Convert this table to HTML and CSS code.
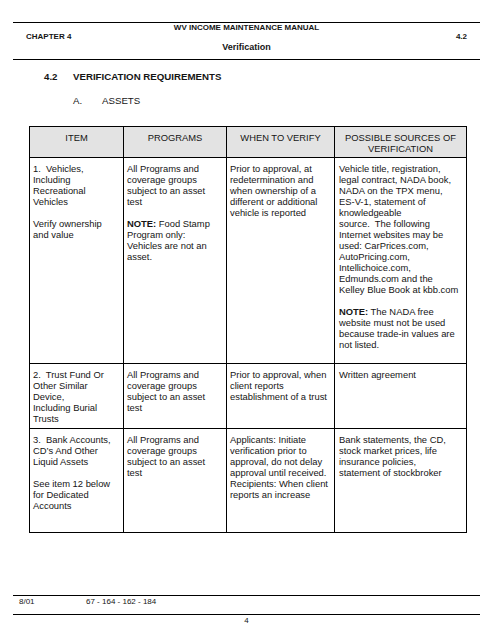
FILE: index.html
```html
<!DOCTYPE html>
<html lang="en">
<head>
<meta charset="utf-8">
<title>WV Income Maintenance Manual – 4.2 Verification</title>
<link rel="stylesheet" href="styles.css">
</head>
<body>
<div class="page">
  <header class="hdr">
    <div class="hdr-title">WV INCOME MAINTENANCE MANUAL</div>
    <div class="hdr-chapter">CHAPTER 4</div>
    <div class="hdr-num">4.2</div>
    <div class="hdr-sub">Verification</div>
  </header>

  <h1 class="section"><span class="sec-num">4.2</span><span>VERIFICATION REQUIREMENTS</span></h1>
  <h2 class="subsection"><span class="sub-num">A.</span><span>ASSETS</span></h2>

  <table class="vt">
    <colgroup>
      <col class="c1"><col class="c2"><col class="c3"><col class="c4">
    </colgroup>
    <thead>
      <tr>
        <th>ITEM</th>
        <th>PROGRAMS</th>
        <th>WHEN TO VERIFY</th>
        <th>POSSIBLE SOURCES OF<br>VERIFICATION</th>
      </tr>
    </thead>
    <tbody>
      <tr class="r1">
        <td>
          <p>1.&nbsp; Vehicles,<br>Including<br>Recreational<br>Vehicles</p>
          <p>Verify ownership<br>and value</p>
        </td>
        <td>
          <p>All Programs and<br>coverage groups<br>subject to an asset<br>test</p>
          <p><b>NOTE:</b> Food Stamp<br>Program only:<br>Vehicles are not an<br>asset.</p>
        </td>
        <td>
          <p>Prior to approval, at<br>redetermination and<br>when ownership of a<br>different or additional<br>vehicle is reported</p>
        </td>
        <td>
          <p>Vehicle title, registration,<br>legal contract, NADA book,<br>NADA on the TPX menu,<br>ES-V-1, statement of<br>knowledgeable<br>source.&nbsp; The following<br>Internet websites may be<br>used: CarPrices.com,<br>AutoPricing.com,<br>Intellichoice.com,<br>Edmunds.com and the<br>Kelley Blue Book at kbb.com</p>
          <p><b>NOTE:</b> The NADA free<br>website must not be used<br>because trade-in values are<br>not listed.</p>
        </td>
      </tr>
      <tr class="r2">
        <td>
          <p>2.&nbsp; Trust Fund Or<br>Other Similar<br>Device,<br>Including Burial<br>Trusts</p>
        </td>
        <td>
          <p>All Programs and<br>coverage groups<br>subject to an asset<br>test</p>
        </td>
        <td>
          <p>Prior to approval, when<br>client reports<br>establishment of a trust</p>
        </td>
        <td>
          <p>Written agreement</p>
        </td>
      </tr>
      <tr class="r3">
        <td>
          <p>3.&nbsp; Bank Accounts,<br>CD’s And Other<br>Liquid Assets</p>
          <p>See item 12 below<br>for Dedicated<br>Accounts</p>
        </td>
        <td>
          <p>All Programs and<br>coverage groups<br>subject to an asset<br>test</p>
        </td>
        <td>
          <p>Applicants: Initiate<br>verification prior to<br>approval, do not delay<br>approval until received.<br>Recipients: When client<br>reports an increase</p>
        </td>
        <td>
          <p>Bank statements, the CD,<br>stock market prices, life<br>insurance policies,<br>statement of stockbroker</p>
        </td>
      </tr>
    </tbody>
  </table>

  <footer class="ftr">
    <div class="ftr-row">
      <span class="ftr-date">8/01</span>
      <span class="ftr-codes">67 - 164 - 162 - 184</span>
    </div>
  </footer>
  <div class="pageno">4</div>
</div>
</body>
</html>
```

FILE: styles.css
```css
html, body {
  margin: 0;
  padding: 0;
  background: #ffffff;
}

body {
  font-family: "Liberation Sans", Arial, sans-serif;
  color: #151515;
}

.page {
  width: 495px;
  height: 640px;
  overflow: hidden;
}

/* running header */
.hdr {
  margin: 22px 15px 0 13px;
  border-top: 1px solid #000;
  border-bottom: 1px solid #000;
  display: grid;
  grid-template-columns: 1fr auto 1fr;
  grid-template-rows: 9px 10px 10px;
  padding: 0 13px 7px 13px;
  font-size: 8px;
  font-weight: bold;
  line-height: 10px;
}

.hdr-title {
  grid-column: 2;
  grid-row: 1;
  text-align: center;
}

.hdr-chapter {
  grid-column: 1;
  grid-row: 2;
}

.hdr-num {
  grid-column: 3;
  grid-row: 2;
  text-align: right;
}

.hdr-sub {
  grid-column: 2;
  grid-row: 3;
  text-align: center;
  font-size: 9px;
}

/* headings */
.section {
  display: flex;
  margin: 11px 0 0 44px;
  font-size: 9.7px;
  line-height: 11px;
  font-weight: bold;
}

.sec-num {
  width: 29px;
}

.subsection {
  display: flex;
  margin: 13px 0 0 73px;
  font-size: 9.7px;
  line-height: 11px;
  font-weight: normal;
}

.sub-num {
  width: 29px;
}

/* verification table */
.vt {
  margin: 20px 0 0 29px;
  width: 437px;
  border-collapse: collapse;
  table-layout: fixed;
  font-size: 9.4px;
  line-height: 11px;
}

.vt .c1 { width: 94px; }
.vt .c2 { width: 103px; }
.vt .c3 { width: 108px; }
.vt .c4 { width: 132px; }

.vt th,
.vt td {
  border: 1px solid #000;
  vertical-align: top;
  white-space: nowrap;
}

.vt th {
  background: #e3e3e3;
  font-weight: normal;
  text-align: center;
  padding: 5px 3px 3px;
  height: 22px;
}

.vt td {
  text-align: left;
  padding: 5px 3px 4px 3px;
}

.vt td:last-child {
  padding-left: 4px;
}

.vt p {
  margin: 0 0 11px 0;
}

.vt p:last-child {
  margin-bottom: 0;
}

.vt .r1 td { height: 196px; }
.vt .r2 td { height: 55px; }
.vt .r3 td { height: 94px; }

/* running footer */
.ftr {
  margin: 62px 15px 0 13px;
  border-top: 1px solid #000;
  border-bottom: 1px solid #000;
  padding: 1px 0 7px 6px;
  font-size: 8px;
  line-height: 10px;
}

.ftr-row {
  display: flex;
}

.ftr-date {
  width: 67px;
}

.pageno {
  text-align: center;
  font-size: 8px;
  line-height: 10px;
  margin-top: 1px;
  padding-right: 2px;
}
```
